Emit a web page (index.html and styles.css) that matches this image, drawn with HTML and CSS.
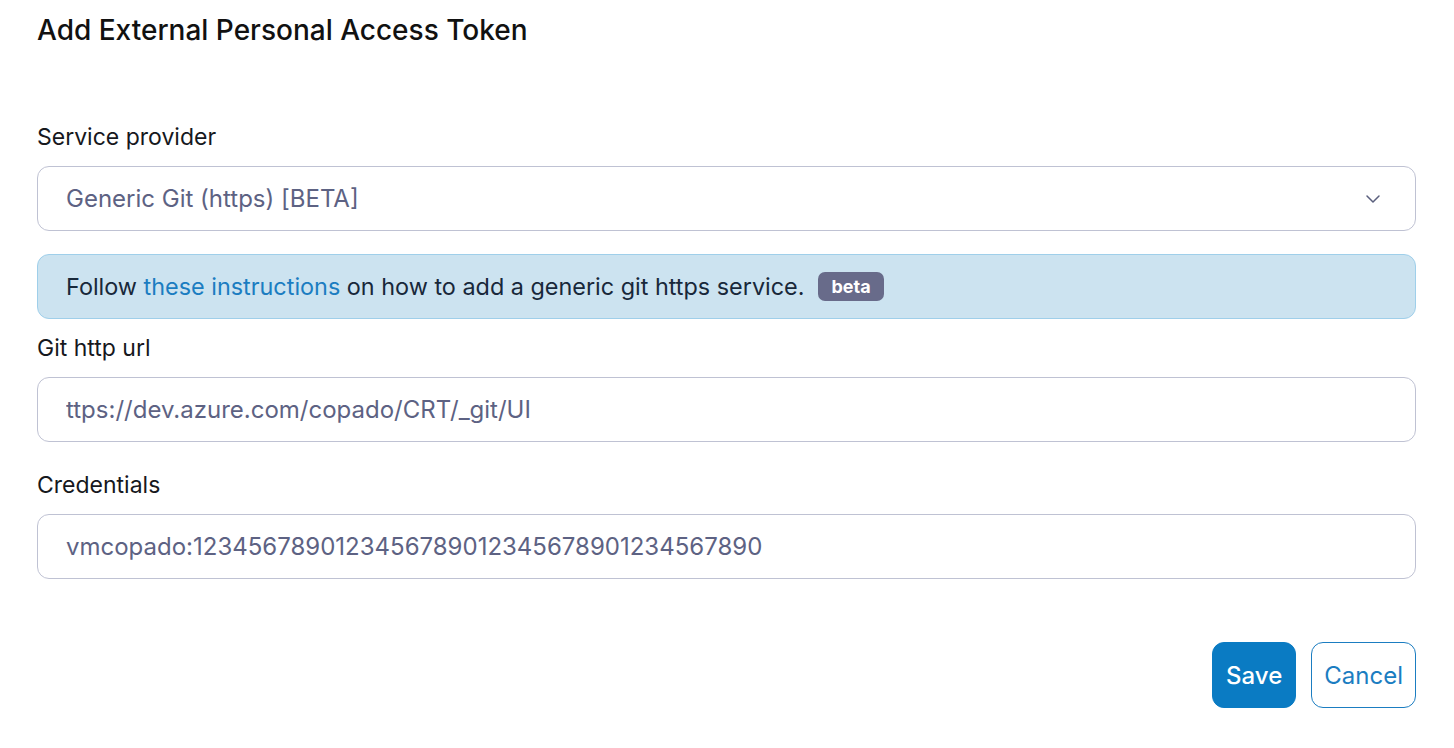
FILE: index.html
```html
<!DOCTYPE html>
<html lang="en">
<head>
  <meta charset="UTF-8" />
  <title>Add External Personal Access Token</title>
  <link rel="stylesheet" href="styles.css">
</head>
<body>
  <div class="dialog">
    <h1 class="title">Add External Personal Access Token</h1>

    <form class="token-form">
      <div class="field field-provider">
        <label class="field-label" for="provider">Service provider</label>
        <div class="select-box">
          <span class="select-value">Generic Git (https) [BETA]</span>
          <svg class="chevron" width="16" height="10" viewBox="0 0 16 10">
            <path d="M2 2l6 6 6-6" fill="none" stroke="#5a5f7d" stroke-width="1.5" stroke-linecap="round" stroke-linejoin="round"/>
          </svg>
        </div>
      </div>

      <div class="info-box">
        <span class="info-text">Follow <a href="#" class="info-link">these instructions</a> on how to add a generic git https service.</span>
        <span class="badge">beta</span>
      </div>

      <div class="field">
        <label class="field-label" for="gitUrl">Git http url</label>
        <input class="text-input" id="gitUrl" type="text" value="ttps://dev.azure.com/copado/CRT/_git/UI" />
      </div>

      <div class="field">
        <label class="field-label" for="credentials">Credentials</label>
        <input class="text-input" id="credentials" type="text" value="vmcopado:1234567890123456789012345678901234567890" />
      </div>

      <div class="actions">
        <button type="button" class="btn btn-primary">Save</button>
        <button type="button" class="btn btn-outline">Cancel</button>
      </div>
    </form>
  </div>
</body>
</html>
```

FILE: styles.css
```css
body {
  margin: 0;
  background-color: #fff;
  font-family: Inter, "Noto Sans", sans-serif;
  color: #16181d;
}
.dialog {
  padding: 11px 38px 0 37px;
}
.title {
  margin: 0;
  font-size: 28px;
  font-weight: 500;
  line-height: 38px;
  color: #111;
}
.token-form {
  margin-top: 73px;
}
.field-label {
  display: block;
  font-size: 23px;
  line-height: 30px;
  margin-bottom: 14px;
  color: #16181d;
}
.select-box,
.text-input {
  box-sizing: border-box;
  width: 100%;
  height: 65px;
  border: 1.5px solid #bfc2d3;
  border-radius: 12px;
  background: #fff;
  padding: 0 28px;
  font-family: inherit;
  font-size: 24px;
  color: #5d6283;
}
.select-box {
  display: flex;
  align-items: center;
  justify-content: space-between;
  padding-right: 34px;
}
.text-input {
  display: block;
  outline: none;
}
.info-box {
  box-sizing: border-box;
  display: flex;
  align-items: center;
  height: 65px;
  margin-top: 23px;
  padding: 0 28px;
  background-color: #cce3f0;
  border: 1.5px solid #9fcfea;
  border-radius: 12px;
  font-size: 23.4px;
  color: #18283a;
}
.info-link {
  color: #1b7dc1;
  text-decoration: none;
}
.badge {
  margin-left: 14px;
  padding: 4px 13px;
  background-color: #686b8a;
  color: #fff;
  border-radius: 7px;
  font-size: 18px;
  font-weight: 700;
}
.field {
  margin-top: 14px;
}
.field-provider {
  margin-top: 0;
}
.field + .field {
  margin-top: 28px;
}
.actions {
  display: flex;
  justify-content: flex-end;
  gap: 15px;
  margin-top: 63px;
}
.btn {
  height: 66px;
  padding: 0 13px;
  border-radius: 12px;
  font-family: inherit;
  font-size: 24px;
  cursor: pointer;
}
.btn-primary {
  background-color: #0a7bc3;
  border: 1.5px solid #0a7bc3;
  color: #fff;
  font-weight: 500;
}
.btn-outline {
  padding: 0 12px;
  background: #fff;
  border: 1.5px solid #1b7dc1;
  color: #1b7dc1;
}
```
